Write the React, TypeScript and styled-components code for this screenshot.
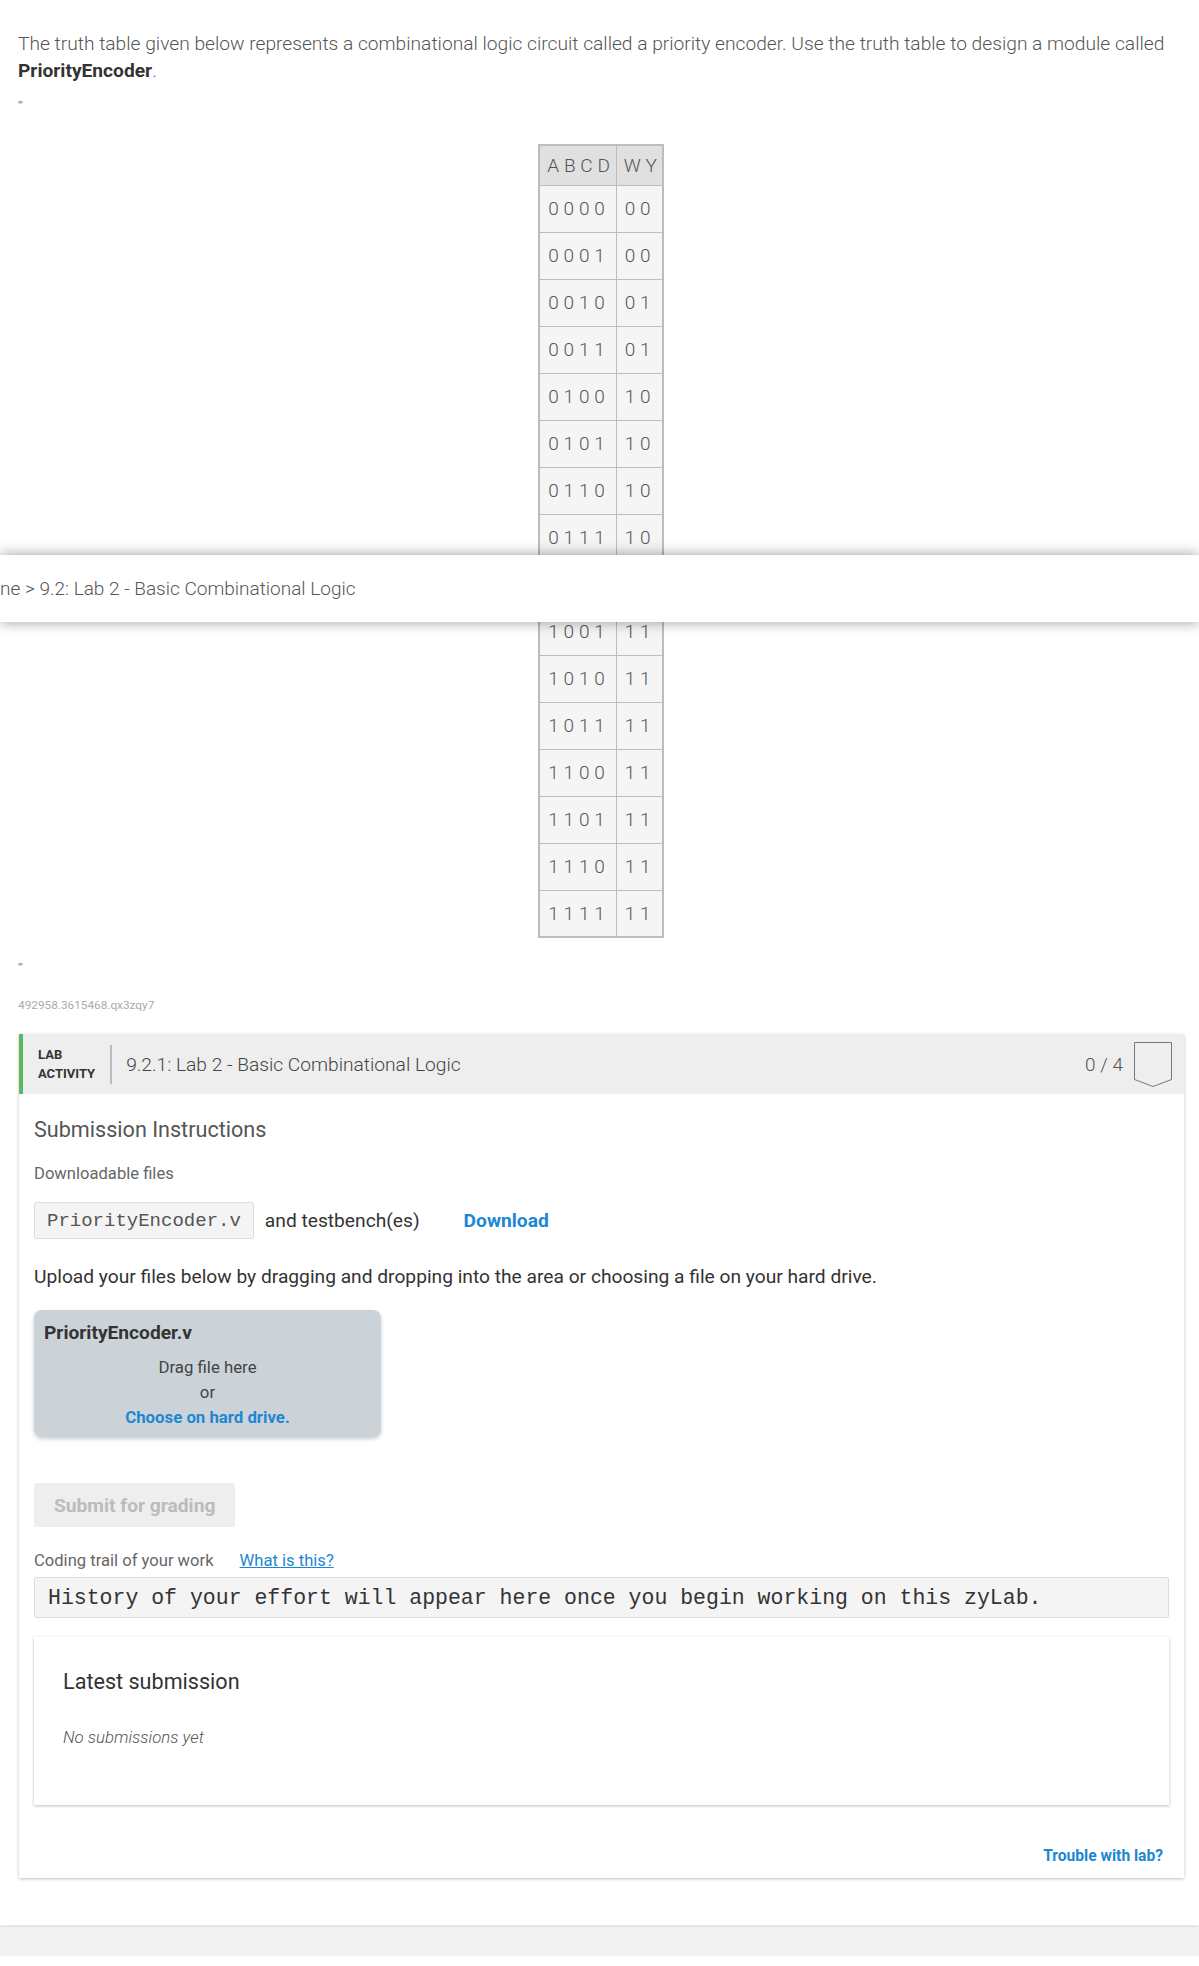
import React from "react";
import styled, { createGlobalStyle } from "styled-components";

const Colors = {
  text: "#333333",
  muted: "#555555",
  faint: "#aaaaaa",
  border: "#bdbdbd",
  link: "#1c87d3",
  green: "#5cb85c",
};

const GlobalStyle = createGlobalStyle`
  body {
    margin: 0;
    background: #ffffff;
    font-family: Roboto, "Liberation Sans", sans-serif;
    color: ${Colors.text};
  }
`;

const rows: Array<[string, string]> = [
  ["0000", "00"],
  ["0001", "00"],
  ["0010", "01"],
  ["0011", "01"],
  ["0100", "10"],
  ["0101", "10"],
  ["0110", "10"],
  ["0111", "10"],
  ["1000", "11"],
  ["1001", "11"],
  ["1010", "11"],
  ["1011", "11"],
  ["1100", "11"],
  ["1101", "11"],
  ["1110", "11"],
  ["1111", "11"],
];

const Page = styled.div`
  position: relative;
  min-height: 1966px;
`;

const Main = styled.main`
  padding: 30px 15px 0 18px;
`;

const Intro = styled.p`
  margin: 0;
  font-size: 19.2px;
  line-height: 27px;
  font-weight: 300;
  color: ${Colors.muted};
  b {
    font-weight: 700;
    color: ${Colors.text};
  }
`;

const Ticks = styled.div<{ $top: number }>`
  margin-top: ${(p) => p.$top}px;
  font-size: 11px;
  line-height: 10px;
  color: #777;
`;

const Table = styled.table`
  margin: 33px auto 0;
  border-collapse: collapse;
  border: 2px solid ${Colors.border};
  table-layout: fixed;
  font-size: 19px;
  font-weight: 300;
  color: ${Colors.muted};
`;

const HeadCell = styled.th<{ $w: number }>`
  width: ${(p) => p.$w}px;
  height: 40px;
  padding: 0 0 0 7px;
  box-sizing: border-box;
  background: #e0e0e0;
  border: 1px solid ${Colors.border};
  font-weight: 300;
  text-align: left;
  letter-spacing: 4.8px;
`;

const Cell = styled.td`
  height: 47px;
  padding: 0 0 0 8px;
  box-sizing: border-box;
  background: #f5f5f5;
  border: 1px solid ${Colors.border};
  letter-spacing: 4.8px;
`;

const StickyBar = styled.div`
  position: absolute;
  top: 555px;
  left: 0;
  right: 0;
  height: 67px;
  display: flex;
  align-items: center;
  background: #ffffff;
  box-shadow: 0 0 13px rgba(0, 0, 0, 0.4);
  overflow: hidden;
  z-index: 2;
`;

const Crumbs = styled.div`
  font-size: 19px;
  font-weight: 300;
  color: ${Colors.muted};
  white-space: nowrap;
`;

const ItemId = styled.div`
  margin-top: 25px;
  font-size: 11.8px;
  line-height: 14px;
  color: ${Colors.faint};
`;

const LabCard = styled.section`
  margin: 22px 0 0 1px;
  background: #ffffff;
  box-shadow: 0 1px 3px rgba(0, 0, 0, 0.25);
`;

const LabHeader = styled.header`
  display: flex;
  align-items: center;
  height: 60px;
  padding-left: 15px;
  background: #eeeeee;
  border-left: 4px solid ${Colors.green};
`;

const LabLabel = styled.div`
  font-size: 13px;
  line-height: 19px;
  font-weight: 700;
  text-transform: uppercase;
  color: ${Colors.text};
`;

const HeaderDivider = styled.div`
  width: 2px;
  height: 39px;
  margin: 0 14px 0 15px;
  background: #bbbbbb;
`;

const LabTitle = styled.h2`
  margin: 0;
  font-size: 19.2px;
  font-weight: 300;
  color: #444;
`;

const Score = styled.div`
  margin-left: auto;
  font-size: 19px;
  font-weight: 300;
  color: ${Colors.muted};
`;

const Badge = styled.svg`
  margin: 0 12px 0 11px;
`;

const LabBody = styled.div`
  padding: 0 15px 12px;
`;

const SectionTitle = styled.h3`
  margin: 24px 0 0;
  font-size: 21.6px;
  line-height: 24px;
  font-weight: 400;
  color: ${Colors.muted};
`;

const SmallLabel = styled.div<{ $top?: number }>`
  margin-top: ${(p) => p.$top ?? 0}px;
  font-size: 16.6px;
  line-height: 20px;
  color: #666;
  display: flex;
  gap: 26px;
`;

const FileRow = styled.div`
  display: flex;
  align-items: center;
  margin-top: 18px;
  font-size: 19.2px;
  color: ${Colors.text};
`;

const FileChip = styled.span`
  display: inline-flex;
  align-items: center;
  height: 37px;
  padding: 0 12px;
  box-sizing: border-box;
  background: #f4f4f4;
  border: 1px solid #dddddd;
  border-radius: 2px;
  font-family: "Liberation Mono", "Courier New", monospace;
  font-size: 19px;
  color: ${Colors.muted};
`;

const Link = styled.a<{ $bold?: boolean; $underline?: boolean }>`
  color: ${Colors.link};
  font-weight: ${(p) => (p.$bold ? 700 : 400)};
  text-decoration: ${(p) => (p.$underline ? "underline" : "none")};
  cursor: pointer;
`;

const DownloadLink = styled(Link)`
  margin-left: 44px;
`;

const Paragraph = styled.p`
  margin: 26px 0 0;
  font-size: 19.2px;
  line-height: 24px;
  color: ${Colors.text};
`;

const DropZone = styled.div`
  width: 347px;
  margin-top: 21px;
  padding: 12px 10px 7px;
  box-sizing: border-box;
  background: #ccd3d8;
  border-radius: 8px;
  box-shadow: 0 2px 4px rgba(0, 0, 0, 0.2);
`;

const DropTitle = styled.div`
  font-size: 19.2px;
  line-height: 22px;
  font-weight: 700;
  color: ${Colors.text};
`;

const DropText = styled.div`
  margin-top: 11px;
  font-size: 16.8px;
  line-height: 25px;
  text-align: center;
  color: #444;
`;

const SubmitButton = styled.button`
  display: block;
  margin-top: 46px;
  height: 44px;
  padding: 0 20px;
  border: none;
  border-radius: 2px;
  background: #eeeeee;
  font-family: Roboto, "Liberation Sans", sans-serif;
  font-size: 19.2px;
  font-weight: 700;
  color: #bbbbbb;
`;

const History = styled.div`
  margin-top: 6px;
  height: 41px;
  padding-left: 13px;
  display: flex;
  align-items: center;
  box-sizing: border-box;
  background: #f4f4f4;
  border: 1px solid #dddddd;
  border-radius: 2px;
  font-family: "Liberation Mono", "Courier New", monospace;
  font-size: 21.5px;
  color: ${Colors.text};
  white-space: nowrap;
`;

const SubmissionCard = styled.div`
  margin-top: 19px;
  padding: 32px 29px 58px;
  background: #ffffff;
  box-shadow: 0 1px 3px rgba(0, 0, 0, 0.25);
`;

const SubmissionTitle = styled.h3`
  margin: 0;
  font-size: 21.6px;
  line-height: 26px;
  font-weight: 400;
  color: ${Colors.text};
`;

const EmptyNote = styled.div`
  margin-top: 32px;
  font-size: 16.8px;
  line-height: 20px;
  font-style: italic;
  font-weight: 300;
  color: ${Colors.muted};
`;

const HelpRow = styled.div`
  margin: 41px 6px 0 0;
  font-size: 15.6px;
  line-height: 20px;
  text-align: right;
`;

const Footer = styled.footer`
  margin-top: 49px;
  height: 29px;
  background: #f3f3f3;
  box-shadow: 0 -1px 2px rgba(0, 0, 0, 0.2);
`;

const TruthTable = () => (
  <Table>
    <thead>
      <tr>
        <HeadCell $w={77}>ABCD</HeadCell>
        <HeadCell $w={44}>WY</HeadCell>
      </tr>
    </thead>
    <tbody>
      {rows.map(([inputs, outputs]) => (
        <tr key={inputs}>
          <Cell>{inputs}</Cell>
          <Cell>{outputs}</Cell>
        </tr>
      ))}
    </tbody>
  </Table>
);

export default function App() {
  return (
    <Page>
      <GlobalStyle />
      <StickyBar>
        <Crumbs>ne &gt; 9.2: Lab 2 - Basic Combinational Logic</Crumbs>
      </StickyBar>
      <Main>
        <Intro>
          The truth table given below represents a combinational logic circuit
          called a priority encoder. Use the truth table to design a module
          called <b>PriorityEncoder</b>.
        </Intro>
        <Ticks $top={17}>'''</Ticks>
        <TruthTable />
        <Ticks $top={25}>'''</Ticks>
        <ItemId>492958.3615468.qx3zqy7</ItemId>

        <LabCard>
          <LabHeader>
            <LabLabel>
              Lab
              <br />
              Activity
            </LabLabel>
            <HeaderDivider />
            <LabTitle>9.2.1: Lab 2 - Basic Combinational Logic</LabTitle>
            <Score>0 / 4</Score>
            <Badge width="38" height="45" viewBox="0 0 38 45">
              <path
                d="M0.5 0.5 H37.5 V37.5 L19 44.5 L0.5 37.5 Z"
                fill="none"
                stroke="#777"
                strokeWidth="1"
              />
            </Badge>
          </LabHeader>

          <LabBody>
            <SectionTitle>Submission Instructions</SectionTitle>
            <SmallLabel $top={22}>Downloadable files</SmallLabel>
            <FileRow>
              <FileChip>PriorityEncoder.v</FileChip>
              <span style={{ marginLeft: 11 }}>and testbench(es)</span>
              <DownloadLink $bold>Download</DownloadLink>
            </FileRow>
            <Paragraph>
              Upload your files below by dragging and dropping into the area or
              choosing a file on your hard drive.
            </Paragraph>
            <DropZone>
              <DropTitle>PriorityEncoder.v</DropTitle>
              <DropText>
                Drag file here
                <br />
                or
                <br />
                <Link $bold>Choose on hard drive.</Link>
              </DropText>
            </DropZone>
            <SubmitButton disabled>Submit for grading</SubmitButton>
            <SmallLabel $top={24}>
              <span>Coding trail of your work</span>
              <Link $underline>What is this?</Link>
            </SmallLabel>
            <History>
              History of your effort will appear here once you begin working on
              this zyLab.
            </History>
            <SubmissionCard>
              <SubmissionTitle>Latest submission</SubmissionTitle>
              <EmptyNote>No submissions yet</EmptyNote>
            </SubmissionCard>
            <HelpRow>
              <Link $bold>Trouble with lab?</Link>
            </HelpRow>
          </LabBody>
        </LabCard>
      </Main>
      <Footer />
    </Page>
  );
}
